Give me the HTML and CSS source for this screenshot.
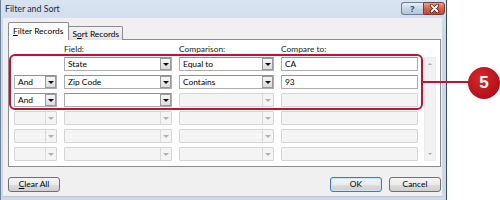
FILE: index.html
```html
<!DOCTYPE html>
<html>
<head>
<meta charset="utf-8">
<link rel="stylesheet" href="styles.css">
</head>
<body>
<div class="window">
  <div class="titlebar">
    <span class="title">Filter and Sort</span>
    <div class="caps">
      <div class="cap help"><span>?</span></div>
      <div class="cap close">
        <svg width="11" height="9" viewBox="0 0 11 9"><path d="M2.5 1.5 L8.5 7.5 M8.5 1.5 L2.5 7.5" stroke="#5a1a10" stroke-width="3.4" stroke-linecap="round"/><path d="M2.5 1.5 L8.5 7.5 M8.5 1.5 L2.5 7.5" stroke="#fff" stroke-width="1.8" stroke-linecap="round"/></svg>
      </div>
    </div>
  </div>
  <div class="client">
    <div class="tabs">
      <div class="tab active"><u>F</u>ilter Records</div>
      <div class="tab">S<u>o</u>rt Records</div>
    </div>
    <div class="panel">
      <div class="heads">
        <span></span><span>Field:</span><span>Comparison:</span><span>Compare to:</span>
      </div>
      <div class="body">
        <div class="rows">
          <div></div>
          <div class="combo"><span class="val">State</span><span class="btn"></span></div>
          <div class="combo"><span class="val">Equal to</span><span class="btn"></span></div>
          <div class="text"><span class="val">CA</span></div>

          <div class="combo"><span class="val">And</span><span class="btn"></span></div>
          <div class="combo"><span class="val">Zip Code</span><span class="btn"></span></div>
          <div class="combo"><span class="val">Contains</span><span class="btn"></span></div>
          <div class="text"><span class="val">93</span></div>

          <div class="combo"><span class="val">And</span><span class="btn"></span></div>
          <div class="combo"><span class="val"></span><span class="btn"></span></div>
          <div class="combo off"><span class="val"></span><span class="btn"></span></div>
          <div class="text off"></div>

          <div class="combo off"><span class="val"></span><span class="btn"></span></div>
          <div class="combo off"><span class="val"></span><span class="btn"></span></div>
          <div class="combo off"><span class="val"></span><span class="btn"></span></div>
          <div class="text off"></div>

          <div class="combo off"><span class="val"></span><span class="btn"></span></div>
          <div class="combo off"><span class="val"></span><span class="btn"></span></div>
          <div class="combo off"><span class="val"></span><span class="btn"></span></div>
          <div class="text off"></div>

          <div class="combo off"><span class="val"></span><span class="btn"></span></div>
          <div class="combo off"><span class="val"></span><span class="btn"></span></div>
          <div class="combo off"><span class="val"></span><span class="btn"></span></div>
          <div class="text off"></div>
        </div>
        <div class="scrollbar">
          <span class="arr up"></span>
          <span class="arr down"></span>
        </div>
      </div>
    </div>
    <div class="footer">
      <div class="button"><u>C</u>lear All</div>
      <div class="right">
        <div class="button default">OK</div>
        <div class="button">Cancel</div>
      </div>
    </div>
  </div>
</div>
<div class="callout-box"></div>
<div class="callout-line"></div>
<div class="callout-num">5</div>
</body>
</html>
```

FILE: styles.css
```css
html, body {
  margin: 0;
  padding: 0;
  background: #ffffff;
}
body {
  width: 500px;
  height: 200px;
  position: relative;
  overflow: hidden;
  font-family: "Lato", "Open Sans", sans-serif;
  font-size: 8.4px;
  color: #000;
}
.window {
  width: 447px;
  height: 200px;
  box-sizing: border-box;
  border-left: 1px solid #6e8299;
  border-right: 1px solid #3c4c60;
  background: linear-gradient(#d9e4f1, #c9d7e8 40px, #cdd9e9);
  display: flex;
  flex-direction: column;
}
.titlebar {
  height: 18px;
  display: flex;
  align-items: flex-start;
  justify-content: space-between;
  flex: none;
}
.title {
  font-size: 8.8px;
  line-height: 17px;
  padding-left: 4px;
  color: #1e2a3a;
}
.caps {
  display: flex;
  margin-top: 2px;
  margin-right: 1px;
}
.cap {
  height: 13px;
  box-sizing: border-box;
  border: 1px solid #6d7f95;
  display: flex;
  align-items: center;
  justify-content: center;
}
.help {
  width: 22px;
  border-radius: 3px 0 0 3px;
  border-right: none;
  background: linear-gradient(#e6eef7, #c6d4e5 50%, #b4c6dc);
  font-family: "Open Sans", sans-serif;
  font-weight: bold;
  font-size: 9px;
  color: #3a4a5e;
}
.help span { line-height: 10px; }
.close {
  width: 22px;
  border-radius: 0 3px 3px 0;
  border-color: #7a3a30;
  background: linear-gradient(#e8a090, #d0634f 50%, #c24a36);
}
.client {
  flex: 1;
  margin: 0 4px 3px 2px;
  background: #f0f0f0;
  display: flex;
  flex-direction: column;
  border-bottom: 1px solid #b8c6d8;
}
.tabs {
  display: flex;
  align-items: flex-end;
  padding-left: 5px;
  height: 22px;
  margin-bottom: -1px;
  position: relative;
  z-index: 1;
}
.tab {
  height: 14px;
  box-sizing: border-box;
  border: 1px solid #898c95;
  border-bottom: none;
  background: linear-gradient(#f3f3f3, #e3e3e3);
  padding: 0 3px;
  line-height: 14px;
  margin-left: -1px;
  border-radius: 2px 2px 0 0;
}
.tab.active {
  height: 18px;
  background: #fff;
  padding: 0 5px 0 4px;
  line-height: 17px;
  margin-left: 0;
}
.panel {
  margin: 0 1px 0 5px;
  border: 1px solid #898c95;
  background: #fff;
  padding: 0 0 5px 5px;
}
.heads, .rows {
  display: grid;
  grid-template-columns: 43px 108px 95px 137px;
  column-gap: 7px;
}
.heads {
  height: 13px;
  margin-top: 3px;
  margin-bottom: 1px;
  line-height: 13px;
  color: #1a1a1a;
}
.body {
  display: flex;
}
.rows {
  grid-auto-rows: 14px;
  row-gap: 4px;
}
.combo, .text {
  box-sizing: border-box;
  height: 14px;
  border: 1px solid #abadb3;
  border-top-color: #8e9198;
  background: #fff;
  display: flex;
  border-radius: 1px;
}
.val {
  flex: 1;
  padding-left: 3px;
  line-height: 12px;
  white-space: nowrap;
  overflow: hidden;
}
.btn {
  width: 11px;
  box-sizing: border-box;
  border: 1px solid #9a9a9a;
  margin: 0;
  background: linear-gradient(#f6f6f6, #dcdcdc);
  display: flex;
  align-items: center;
  justify-content: center;
}
.btn::after {
  content: "";
  border-left: 3px solid transparent;
  border-right: 3px solid transparent;
  border-top: 3px solid #111;
}
.off {
  background: #f4f4f4;
  border-color: #d5d5d5;
}
.off .btn {
  background: #f4f4f4;
  border: none;
  border-left: 1px solid #dadada;
}
.off .btn::after {
  border-top-color: #b0b0b0;
}
.scrollbar {
  width: 12px;
  margin-left: 6px;
  box-sizing: border-box;
  background: #f2f2f2;
  border: 1px solid #ececec;
  display: flex;
  flex-direction: column;
  justify-content: space-between;
  align-items: center;
  padding: 5px 0;
}
.arr {
  width: 0;
  height: 0;
  border-left: 2px solid transparent;
  border-right: 2px solid transparent;
}
.arr.up { border-bottom: 2px solid #a8a8a8; }
.arr.down { border-top: 2px solid #a8a8a8; }
.footer {
  display: flex;
  justify-content: space-between;
  margin: 10px 1px 0 5px;
}
.right {
  display: flex;
  gap: 7px;
}
.button {
  width: 52px;
  height: 15px;
  box-sizing: border-box;
  border: 1px solid #707070;
  border-radius: 3px;
  background: linear-gradient(#f4f4f4, #ebebeb 50%, #dcdcdc 51%, #d0d0d0);
  text-align: center;
  line-height: 13px;
}
.button.default {
  border-color: #3c7fb1;
  box-shadow: inset 0 0 0 1px #c8e6f6;
}
.callout-box {
  position: absolute;
  left: 9px;
  top: 54px;
  width: 414px;
  height: 56px;
  box-sizing: border-box;
  border: 2px solid #c8102e;
  border-radius: 6px;
}
.callout-line {
  position: absolute;
  left: 423px;
  top: 81px;
  width: 46px;
  height: 2px;
  background: #c8102e;
}
.callout-num {
  position: absolute;
  left: 468px;
  top: 67px;
  width: 32px;
  height: 32px;
  border-radius: 50%;
  background: radial-gradient(circle at 40% 35%, #d42a2a, #b2101a 70%, #9a0c14);
  color: #fff;
  font-family: "Liberation Sans", Arial, sans-serif;
  font-weight: bold;
  font-size: 17px;
  line-height: 32px;
  text-align: center;
}
```
